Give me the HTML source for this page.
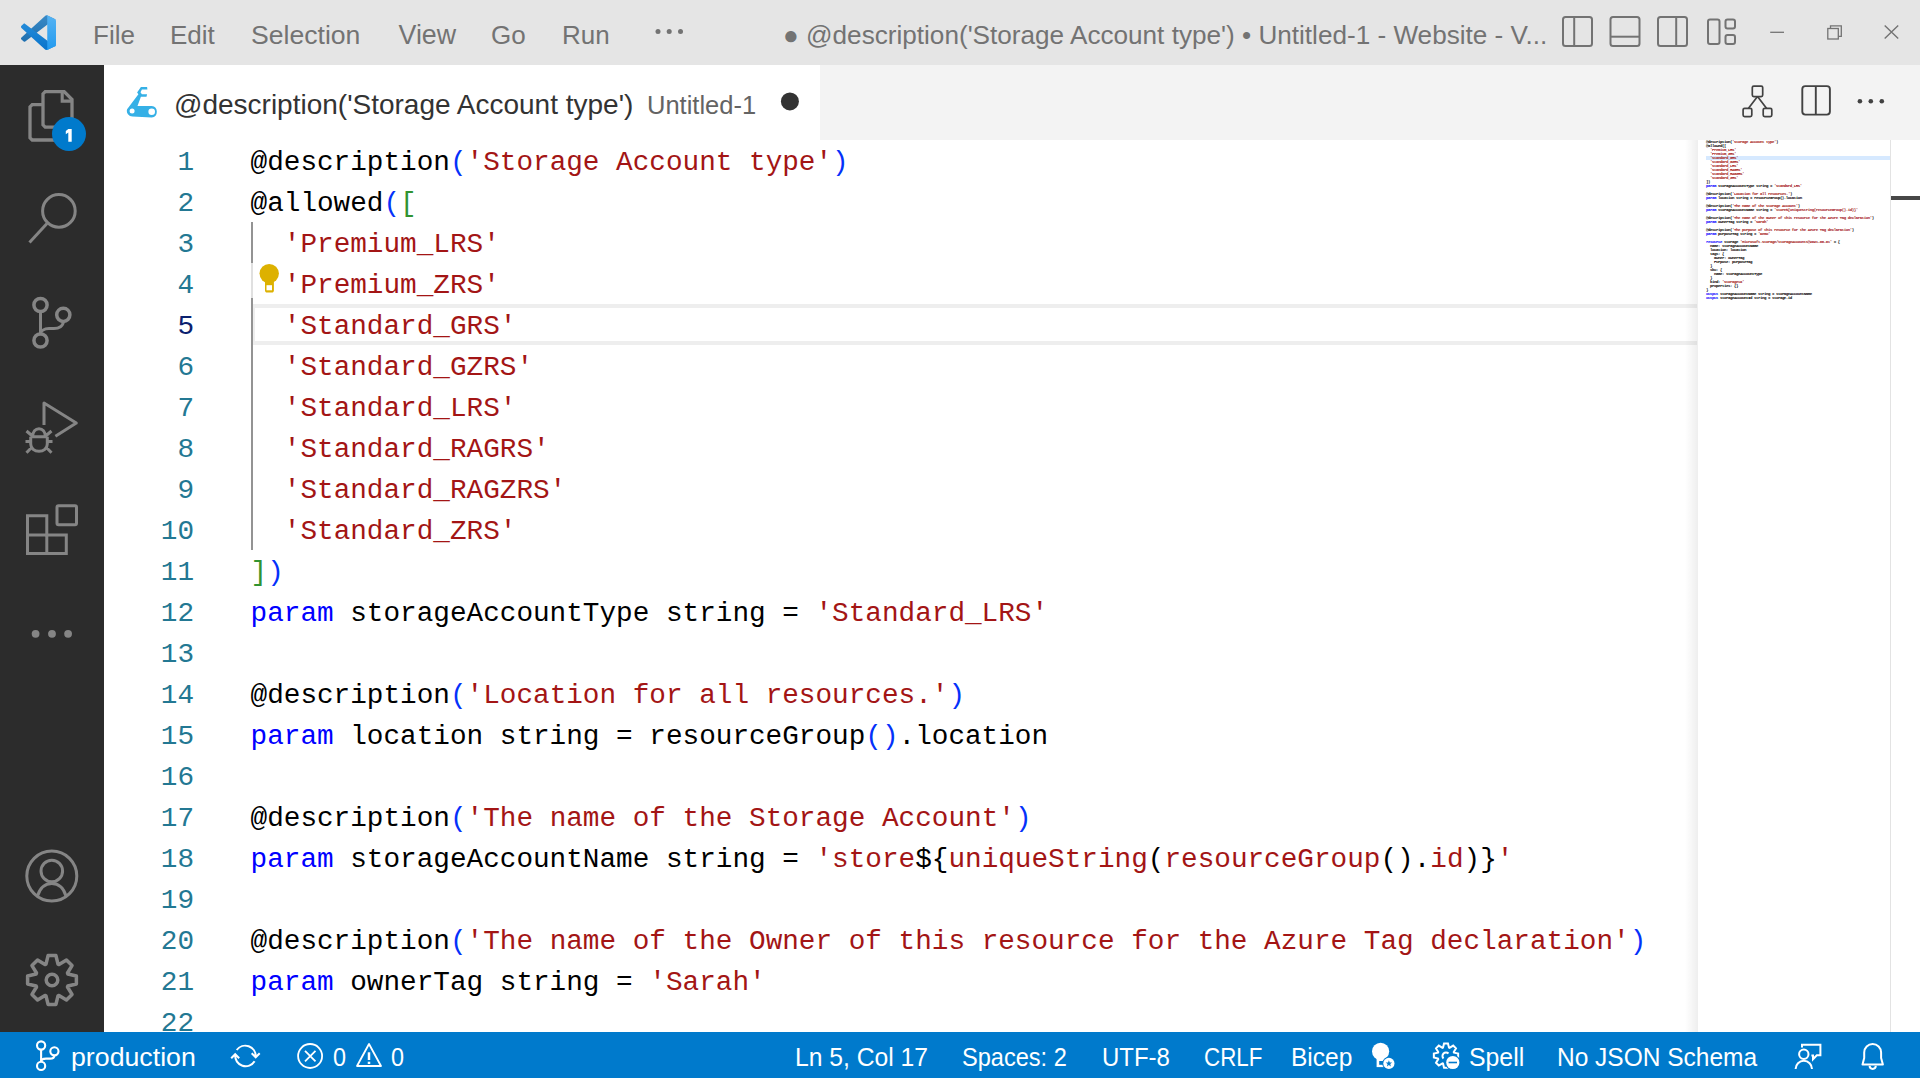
<!DOCTYPE html>
<html><head><meta charset="utf-8">
<style>
*{box-sizing:border-box}
html,body{margin:0;padding:0;width:1920px;height:1078px;overflow:hidden;background:#fff;font-family:"Liberation Sans",sans-serif}
.abs{position:absolute}
#title{position:absolute;left:0;top:0;width:1920px;height:65px;background:#e5e5e5}
.menu{position:absolute;top:2.5px;height:65px;line-height:65px;font-size:26px;color:#737373;white-space:pre}
#activity{position:absolute;left:0;top:65px;width:104px;height:967px;background:#2c2c2c}
#tabs{position:absolute;left:104px;top:65px;width:1816px;height:75px;background:#f3f3f3}
#tab{position:absolute;left:104px;top:65px;width:716px;height:75px;background:#fff}
.tabt{position:absolute;white-space:pre;font-size:27px;color:#333333}
#editor{position:absolute;left:104px;top:140px;width:1816px;height:892px;background:#fff;overflow:hidden}
.ln{position:absolute;left:250.55px;height:41px;line-height:41px;padding-top:2.4px;font-family:"Liberation Mono",monospace;font-size:27.7px;white-space:pre}
.num{position:absolute;left:104px;width:90px;text-align:right;height:41px;line-height:41px;padding-top:2.4px;font-family:"Liberation Mono",monospace;font-size:27.7px;color:#237893}
.num.cur{color:#0b216f}
#status{position:absolute;left:0;top:1032px;width:1920px;height:46px;background:#007acc}
.st{position:absolute;top:1034px;transform-origin:0 0;height:46px;line-height:46px;font-size:26px;color:#fff;white-space:pre}
#minimap{position:absolute;left:1698px;top:140px;width:192px;height:892px;background:#fff;overflow:hidden}
.mml{position:absolute;left:8px;height:4px;line-height:4px;font-family:"Liberation Mono",monospace;font-size:4.1px;letter-spacing:-0.46px;white-space:pre;font-weight:bold}
</style></head><body>
<!-- TITLE BAR -->
<div id="title"></div>
<svg class="abs" style="left:20.8px;top:14.7px" width="35" height="35.3" viewBox="0 0 100 100">
<defs><linearGradient id="g1" x1="0" y1="0" x2="0" y2="100" gradientUnits="userSpaceOnUse"><stop offset="0" stop-color="#3a8ac6"/><stop offset="1" stop-color="#1566a8"/></linearGradient>
<linearGradient id="g2" x1="0" y1="0" x2="0" y2="100" gradientUnits="userSpaceOnUse"><stop offset="0" stop-color="#2d93dd"/><stop offset="1" stop-color="#0873cb"/></linearGradient>
<linearGradient id="g3" x1="0" y1="0" x2="0" y2="100" gradientUnits="userSpaceOnUse"><stop offset="0" stop-color="#55b3f3"/><stop offset="1" stop-color="#229aef"/></linearGradient></defs>
<path fill="url(#g1)" d="M96.4614 10.7962L75.8569 0.875542C73.4719 -0.272773 70.6217 0.211611 68.75 2.08333L1.29858 63.5832C-0.515693 65.2373 -0.513607 68.0937 1.30308 69.7452L6.81272 74.754C8.29793 76.1042 10.5347 76.2036 12.1338 74.9905L93.3609 13.3699C96.086 11.3026 100 13.2462 100 16.6667V16.4275C100 14.0265 98.6246 11.8378 96.4614 10.7962Z"/>
<path fill="url(#g2)" d="M96.4614 89.2038L75.8569 99.1245C73.4719 100.273 70.6217 99.7884 68.75 97.9167L1.29858 36.4169C-0.515693 34.7627 -0.513607 31.9063 1.30308 30.2548L6.81272 25.246C8.29793 23.8958 10.5347 23.7964 12.1338 25.0095L93.3609 86.6301C96.086 88.6974 100 86.7538 100 83.3334V83.5726C100 85.9735 98.6246 88.1622 96.4614 89.2038Z"/>
<path fill="url(#g3)" d="M75.8578 99.1263C73.4721 100.274 70.6219 99.7885 68.75 97.9166C71.0564 100.223 75 98.5895 75 95.3278V4.67213C75 1.41039 71.0564 -0.223106 68.75 2.08329C70.6219 0.211402 73.4721 -0.273666 75.8578 0.873633L96.4587 10.7807C98.6234 11.8217 100 14.0112 100 16.4132V83.5871C100 85.9891 98.6234 88.1786 96.4586 89.2196L75.8578 99.1263Z"/>
</svg>
<div class="menu" style="left:93px">File</div>
<div class="menu" style="left:170px">Edit</div>
<div class="menu" style="left:251px;font-size:26.6px">Selection</div>
<div class="menu" style="left:398.5px;font-size:26.8px">View</div>
<div class="menu" style="left:491px">Go</div>
<div class="menu" style="left:562px">Run</div>
<svg class="abs" style="left:651.3px;top:23.8px" width="40" height="16"><circle cx="7" cy="7.5" r="2.5" fill="#737373"/><circle cx="18.2" cy="7.5" r="2.5" fill="#737373"/><circle cx="29.5" cy="7.5" r="2.5" fill="#737373"/></svg>
<div class="menu" style="left:783px;transform-origin:0 0;transform:scaleX(1.005)">● @description('Storage Account type') • Untitled-1 - Website - V...</div>
<svg class="abs" style="left:1550px;top:0" width="370" height="65" fill="none" stroke="#737373" stroke-width="2">
<rect x="13" y="17" width="29" height="29" rx="2.5"/><line x1="24.2" y1="17" x2="24.2" y2="46"/>
<rect x="60.5" y="17" width="29" height="29" rx="2.5"/><line x1="60.5" y1="36.7" x2="89.5" y2="36.7"/>
<rect x="108" y="17" width="29" height="29" rx="2.5"/><line x1="126.2" y1="17" x2="126.2" y2="46"/>
<rect x="158" y="19.5" width="11.5" height="24.5" rx="2"/><rect x="175.5" y="19.5" width="9.5" height="9" rx="2"/><rect x="175.5" y="35" width="9.5" height="9" rx="2"/>
<line x1="220.2" y1="32.3" x2="234" y2="32.3" stroke-width="1.3"/>
<g stroke-width="1.3"><rect x="277.8" y="28.5" width="10.5" height="10.5"/><path d="M280.5 28.5V25.8H291.3V36.3H288.3"/></g>
<path d="M334.7 25.4L348.2 38.6M348.2 25.4L334.7 38.6" stroke-width="1.4"/>
</svg>

<!-- ACTIVITY BAR -->
<div id="activity"></div>
<svg class="abs" style="left:0;top:65px" width="104" height="967" fill="none" stroke="#858585" stroke-width="3">
<g transform="translate(0,-65)">
<!-- files -->
<path d="M45.2 91.7H64.2L72 99.5V124.9L69.8 127.1H45.2L43 124.9V93.9Z" stroke-width="3.3"/>
<path d="M62.2 91.7V101.1H72" stroke-width="3.1"/>
<path d="M43 104.7H32.2L30 106.9V137.8L32.2 140H56" stroke-width="3.3"/>
<!-- search -->
<circle cx="58.9" cy="210.9" r="16.3"/>
<line x1="47" y1="223.5" x2="29.5" y2="242.5"/>
<!-- source control -->
<g stroke-width="3.5"><circle cx="40.5" cy="305" r="6.6"/><circle cx="63.3" cy="314.8" r="6.6"/><circle cx="40.5" cy="340.5" r="6.6"/></g>
<line x1="40.5" y1="311.8" x2="40.5" y2="333.7"/>
<path d="M63.3 321.6C63.3 326 59 328.5 54 328.5H49C44 328.5 40.5 331 40.5 334"/>
<!-- run and debug -->
<path d="M44 425V403L76.3 423.1L55.4 436.2" stroke-linejoin="round"/>
<path d="M30.7 436.75V444C30.7 448.5 34.5 451.3 39 451.3C43.5 451.3 47.3 448.5 47.3 444V436.75M32.7 436.75C32.7 431.5 35.5 428.7 39 428.7C42.5 428.7 45.3 431.5 45.3 436.75M30.7 436.75H47.3M25.5 441.6H30.7M47.3 441.6H52.5M26.5 431L31.8 435.5M51.5 431L46.2 435.5M26.5 452.8L31.8 447.3M51.5 452.8L46.2 447.3"/>
<!-- extensions -->
<path d="M27.5 515.8H46.8V535H66.3V553.5H27.5Z"/>
<line x1="27.5" y1="535" x2="46.8" y2="535"/><line x1="46.8" y1="535" x2="46.8" y2="553.5"/>
<rect x="57" y="505.8" width="19.5" height="19" rx="1.5"/>
<!-- accounts -->
<circle cx="51.8" cy="876" r="25"/>
<circle cx="51.8" cy="871" r="10.8"/>
<path d="M37.5 896C40 888 45 883.5 51.8 883.5C58.6 883.5 63.6 888 66 896"/>
</g>
</svg>
<svg class="abs" style="left:0;top:600px" width="104" height="60"><circle cx="35.6" cy="33.8" r="3.9" fill="#858585"/><circle cx="52" cy="33.8" r="3.9" fill="#858585"/><circle cx="68.1" cy="33.8" r="3.9" fill="#858585"/></svg>
<!-- gear -->
<svg class="abs" style="left:25.07px;top:953.07px" width="54" height="54" viewBox="-27 -27 54 54" fill="none" stroke="#858585" stroke-width="3.5" stroke-linejoin="round">
<path d="M15.91 -5.99L24.38 -3.94L24.38 3.94L15.91 5.99L15.48 7.02L20.03 14.46L14.46 20.03L7.02 15.48L5.99 15.91L3.94 24.38L-3.94 24.38L-5.99 15.91L-7.02 15.48L-14.46 20.03L-20.03 14.46L-15.48 7.02L-15.91 5.99L-24.38 3.94L-24.38 -3.94L-15.91 -5.99L-15.48 -7.02L-20.03 -14.46L-14.46 -20.03L-7.02 -15.48L-5.99 -15.91L-3.94 -24.38L3.94 -24.38L5.99 -15.91L7.02 -15.48L14.46 -20.03L20.03 -14.46L15.48 -7.02Z"/>
<circle cx="0" cy="0" r="5.8"/>
</svg>
<!-- badge -->
<svg class="abs" style="left:52px;top:117px" width="34" height="34"><circle cx="17" cy="17" r="17" fill="#007acc"/></svg>
<svg class="abs" style="left:52px;top:117px" width="34" height="34"><path d="M16.3 12H19.7V24.7H16.3V15.6L13.8 17.2V14Z" fill="#fff"/></svg>

<!-- TABS -->
<div id="tabs"></div>
<div id="tab"></div>
<svg class="abs" style="left:126px;top:86px" width="33" height="33" viewBox="0 0 33 33">
<path fill="#35b0e6" fill-rule="evenodd" d="M12.4 8.2L11.1 6.5L14.9 1.1H21.1L21.4 3.6H15.9L14.5 6.2L15.9 8.2H21.1L20.5 10.7H14.9L11.5 19.9H25.7A5.9 5.9 0 0 1 25.7 31.6L6.5 30.6A5.7 5.7 0 0 1 1.1 23.2ZM6.1 24.9m-2.5 0a2.5 2.5 0 1 0 5 0a2.5 2.5 0 1 0 -5 0ZM25.7 25.7m-3.3 0a3.3 3.3 0 1 0 6.6 0a3.3 3.3 0 1 0 -6.6 0Z"/>
</svg>
<div class="tabt" style="left:174px;top:86px;line-height:38px;font-size:28px">@description('Storage Account type')</div>
<div class="tabt" style="left:647px;top:86px;line-height:38px;color:#646464;font-size:25.5px">Untitled-1</div>
<svg class="abs" style="left:780px;top:92px" width="20" height="20"><circle cx="9.9" cy="9.4" r="9" fill="#333"/></svg>
<svg class="abs" style="left:1730px;top:65px" width="190" height="75" fill="none" stroke="#424242" stroke-width="1.7">
<rect x="22.3" y="21.1" width="10.4" height="10.5" rx="1.5"/>
<rect x="13.1" y="43.3" width="8.7" height="8.3" rx="1.5"/>
<rect x="33.2" y="43.3" width="8.6" height="8.3" rx="1.5"/>
<path d="M27.5 31.6L18.5 43.3M27.5 31.6L36.5 43.3"/>
<rect x="72.3" y="21.1" width="27.6" height="28.5" rx="3" stroke-width="1.9"/>
<line x1="85.8" y1="21.1" x2="85.8" y2="49.6" stroke-width="1.9"/>
<g fill="#424242" stroke="none"><circle cx="129.9" cy="36.25" r="2.3"/><circle cx="140.8" cy="36.25" r="2.3"/><circle cx="151.8" cy="36.25" r="2.3"/></g>
</svg>

<!-- EDITOR -->
<div id="editor"></div>
<!-- current line -->
<div class="abs" style="left:253px;top:304px;width:1444px;height:41px;border-top:4px solid #eeeeee;border-bottom:4px solid #eeeeee;border-left:2px solid #eeeeee"></div>
<!-- indent guide -->
<div class="abs" style="left:251px;top:222px;width:2px;height:328px;background:#939393"></div>
<div class="abs" style="left:251px;top:263px;width:2px;height:35px;background:#e0e0e0"></div>
<div class="ln" style="top:140px"><span style="color:#000000">@description</span><span style="color:#0431fa">(</span><span style="color:#a31515">&#x27;Storage Account type&#x27;</span><span style="color:#0431fa">)</span></div>
<div class="num" style="top:140px">1</div>
<div class="ln" style="top:181px"><span style="color:#000000">@allowed</span><span style="color:#0431fa">(</span><span style="color:#319331">[</span></div>
<div class="num" style="top:181px">2</div>
<div class="ln" style="top:222px"><span style="color:#000000">  </span><span style="color:#a31515">&#x27;Premium_LRS&#x27;</span></div>
<div class="num" style="top:222px">3</div>
<div class="ln" style="top:263px"><span style="color:#000000">  </span><span style="color:#a31515">&#x27;Premium_ZRS&#x27;</span></div>
<div class="num" style="top:263px">4</div>
<div class="ln" style="top:304px"><span style="color:#000000">  </span><span style="color:#a31515">&#x27;Standard_GRS&#x27;</span></div>
<div class="num cur" style="top:304px">5</div>
<div class="ln" style="top:345px"><span style="color:#000000">  </span><span style="color:#a31515">&#x27;Standard_GZRS&#x27;</span></div>
<div class="num" style="top:345px">6</div>
<div class="ln" style="top:386px"><span style="color:#000000">  </span><span style="color:#a31515">&#x27;Standard_LRS&#x27;</span></div>
<div class="num" style="top:386px">7</div>
<div class="ln" style="top:427px"><span style="color:#000000">  </span><span style="color:#a31515">&#x27;Standard_RAGRS&#x27;</span></div>
<div class="num" style="top:427px">8</div>
<div class="ln" style="top:468px"><span style="color:#000000">  </span><span style="color:#a31515">&#x27;Standard_RAGZRS&#x27;</span></div>
<div class="num" style="top:468px">9</div>
<div class="ln" style="top:509px"><span style="color:#000000">  </span><span style="color:#a31515">&#x27;Standard_ZRS&#x27;</span></div>
<div class="num" style="top:509px">10</div>
<div class="ln" style="top:550px"><span style="color:#319331">]</span><span style="color:#0431fa">)</span></div>
<div class="num" style="top:550px">11</div>
<div class="ln" style="top:591px"><span style="color:#0000ff">param</span><span style="color:#000000"> storageAccountType string = </span><span style="color:#a31515">&#x27;Standard_LRS&#x27;</span></div>
<div class="num" style="top:591px">12</div>
<div class="ln" style="top:632px"></div>
<div class="num" style="top:632px">13</div>
<div class="ln" style="top:673px"><span style="color:#000000">@description</span><span style="color:#0431fa">(</span><span style="color:#a31515">&#x27;Location for all resources.&#x27;</span><span style="color:#0431fa">)</span></div>
<div class="num" style="top:673px">14</div>
<div class="ln" style="top:714px"><span style="color:#0000ff">param</span><span style="color:#000000"> location string = resourceGroup</span><span style="color:#0431fa">()</span><span style="color:#000000">.location</span></div>
<div class="num" style="top:714px">15</div>
<div class="ln" style="top:755px"></div>
<div class="num" style="top:755px">16</div>
<div class="ln" style="top:796px"><span style="color:#000000">@description</span><span style="color:#0431fa">(</span><span style="color:#a31515">&#x27;The name of the Storage Account&#x27;</span><span style="color:#0431fa">)</span></div>
<div class="num" style="top:796px">17</div>
<div class="ln" style="top:837px"><span style="color:#0000ff">param</span><span style="color:#000000"> storageAccountName string = </span><span style="color:#a31515">&#x27;store</span><span style="color:#000000">${</span><span style="color:#a31515">uniqueString</span><span style="color:#000000">(</span><span style="color:#a31515">resourceGroup</span><span style="color:#000000">().</span><span style="color:#a31515">id</span><span style="color:#000000">)}</span><span style="color:#a31515">&#x27;</span></div>
<div class="num" style="top:837px">18</div>
<div class="ln" style="top:878px"></div>
<div class="num" style="top:878px">19</div>
<div class="ln" style="top:919px"><span style="color:#000000">@description</span><span style="color:#0431fa">(</span><span style="color:#a31515">&#x27;The name of the Owner of this resource for the Azure Tag declaration&#x27;</span><span style="color:#0431fa">)</span></div>
<div class="num" style="top:919px">20</div>
<div class="ln" style="top:960px"><span style="color:#0000ff">param</span><span style="color:#000000"> ownerTag string = </span><span style="color:#a31515">&#x27;Sarah&#x27;</span></div>
<div class="num" style="top:960px">21</div>
<div class="ln" style="top:1001px"></div>
<div class="num" style="top:1001px">22</div>
<!-- lightbulb -->
<svg class="abs" style="left:255px;top:260px" width="30" height="36">
<circle cx="14.2" cy="13.6" r="9.7" fill="#ddb100"/>
<path d="M10 20V30.5C10 31.8 10.8 32.6 12 32.6H16.9C18.1 32.6 18.9 31.8 18.9 30.5V20Z" fill="#ddb100"/>
<rect x="11.5" y="25.2" width="5.5" height="5.1" fill="#fff"/>
</svg>
<!-- minimap shadow -->
<div class="abs" style="left:1685px;top:140px;width:13px;height:892px;background:linear-gradient(to right,rgba(0,0,0,0),rgba(0,0,0,0.065))"></div>
<div id="minimap">
<div class="abs" style="left:8px;top:16px;width:184px;height:4px;background:#d6e9ff"></div>
<div class="mml" style="top:0px"><span style="color:#000">@description(</span><span style="color:#a31515">&#x27;Storage Account type&#x27;</span><span style="color:#000">)</span></div>
<div class="mml" style="top:4px"><span style="color:#000">@allowed([</span></div>
<div class="mml" style="top:8px"><span style="color:#000">  </span><span style="color:#a31515">&#x27;Premium_LRS&#x27;</span></div>
<div class="mml" style="top:12px"><span style="color:#000">  </span><span style="color:#a31515">&#x27;Premium_ZRS&#x27;</span></div>
<div class="mml" style="top:16px"><span style="color:#000">  </span><span style="color:#a31515">&#x27;Standard_GRS&#x27;</span></div>
<div class="mml" style="top:20px"><span style="color:#000">  </span><span style="color:#a31515">&#x27;Standard_GZRS&#x27;</span></div>
<div class="mml" style="top:24px"><span style="color:#000">  </span><span style="color:#a31515">&#x27;Standard_LRS&#x27;</span></div>
<div class="mml" style="top:28px"><span style="color:#000">  </span><span style="color:#a31515">&#x27;Standard_RAGRS&#x27;</span></div>
<div class="mml" style="top:32px"><span style="color:#000">  </span><span style="color:#a31515">&#x27;Standard_RAGZRS&#x27;</span></div>
<div class="mml" style="top:36px"><span style="color:#000">  </span><span style="color:#a31515">&#x27;Standard_ZRS&#x27;</span></div>
<div class="mml" style="top:40px"><span style="color:#000">])</span></div>
<div class="mml" style="top:44px"><span style="color:#000000"></span><span style="color:#0000ff">param</span><span style="color:#000"> storageAccountType string = </span><span style="color:#a31515">&#x27;Standard_LRS&#x27;</span></div>
<div class="mml" style="top:48px"></div>
<div class="mml" style="top:52px"><span style="color:#000">@description(</span><span style="color:#a31515">&#x27;Location for all resources.&#x27;</span><span style="color:#000">)</span></div>
<div class="mml" style="top:56px"><span style="color:#000000"></span><span style="color:#0000ff">param</span><span style="color:#000"> location string = resourceGroup().location</span></div>
<div class="mml" style="top:60px"></div>
<div class="mml" style="top:64px"><span style="color:#000">@description(</span><span style="color:#a31515">&#x27;The name of the Storage Account&#x27;</span><span style="color:#000">)</span></div>
<div class="mml" style="top:68px"><span style="color:#000000"></span><span style="color:#0000ff">param</span><span style="color:#000"> storageAccountName string = </span><span style="color:#a31515">&#x27;store${uniqueString(resourceGroup().id)}&#x27;</span></div>
<div class="mml" style="top:72px"></div>
<div class="mml" style="top:76px"><span style="color:#000">@description(</span><span style="color:#a31515">&#x27;The name of the Owner of this resource for the Azure Tag declaration&#x27;</span><span style="color:#000">)</span></div>
<div class="mml" style="top:80px"><span style="color:#000000"></span><span style="color:#0000ff">param</span><span style="color:#000"> ownerTag string = </span><span style="color:#a31515">&#x27;Sarah&#x27;</span></div>
<div class="mml" style="top:84px"></div>
<div class="mml" style="top:88px"><span style="color:#000">@description(</span><span style="color:#a31515">&#x27;The purpose of this resource for the Azure Tag declaration&#x27;</span><span style="color:#000">)</span></div>
<div class="mml" style="top:92px"><span style="color:#000000"></span><span style="color:#0000ff">param</span><span style="color:#000"> purposeTag string = </span><span style="color:#a31515">&#x27;Demo&#x27;</span></div>
<div class="mml" style="top:96px"></div>
<div class="mml" style="top:100px"><span style="color:#000000"></span><span style="color:#0000ff">resource</span><span style="color:#000"> storage </span><span style="color:#a31515">&#x27;Microsoft.Storage/storageAccounts@2021-06-01&#x27;</span><span style="color:#000"> = {</span></div>
<div class="mml" style="top:104px"><span style="color:#000">  name: storageAccountName</span></div>
<div class="mml" style="top:108px"><span style="color:#000">  location: location</span></div>
<div class="mml" style="top:112px"><span style="color:#000">  tags: {</span></div>
<div class="mml" style="top:116px"><span style="color:#000">    Owner: ownerTag</span></div>
<div class="mml" style="top:120px"><span style="color:#000">    Purpose: purposeTag</span></div>
<div class="mml" style="top:124px"><span style="color:#000">  }</span></div>
<div class="mml" style="top:128px"><span style="color:#000">  sku: {</span></div>
<div class="mml" style="top:132px"><span style="color:#000">    name: storageAccountType</span></div>
<div class="mml" style="top:136px"><span style="color:#000">  }</span></div>
<div class="mml" style="top:140px"><span style="color:#000">  kind: </span><span style="color:#a31515">&#x27;StorageV2&#x27;</span></div>
<div class="mml" style="top:144px"><span style="color:#000">  properties: {}</span></div>
<div class="mml" style="top:148px"><span style="color:#000">}</span></div>
<div class="mml" style="top:152px"><span style="color:#000000"></span><span style="color:#0000ff">output</span><span style="color:#000"> storageAccountName string = storageAccountName</span></div>
<div class="mml" style="top:156px"><span style="color:#000000"></span><span style="color:#0000ff">output</span><span style="color:#000"> storageAccountId string = storage.id</span></div>
</div>
<div class="abs" style="left:1890px;top:140px;width:1px;height:892px;background:#e3e3e3"></div>
<div class="abs" style="left:1891px;top:196px;width:29px;height:4px;background:#474747"></div>

<!-- STATUS BAR -->
<div id="status"></div>

<svg class="abs" style="left:0;top:1032px" width="1920" height="46" fill="none" stroke="#fff" stroke-width="1.8">
<g transform="translate(0,-1032)">
<g stroke-width="2.1"><circle cx="41.1" cy="1045.5" r="4.1"/><circle cx="41.1" cy="1065.9" r="4.1"/><circle cx="54.4" cy="1051.3" r="4.1"/>
<line x1="41.1" y1="1049.6" x2="41.1" y2="1061.8"/>
<path d="M54.4 1055.4C54.4 1057.5 52.5 1058.6 50 1058.6H46C43 1058.6 41.1 1060 41.1 1062"/></g>
<!-- sync -->
<path d="M236.7 1050A10.5 10.5 0 0 1 255.7 1056.7M251.7 1053.3L255.7 1057.3L259.7 1053.3M235.2 1055A10.5 10.5 0 0 0 254.6 1061.3M231.2 1058.2L235.2 1054.2L239.2 1058.2" stroke-width="2"/>
<!-- error -->
<circle cx="310.1" cy="1056" r="12"/>
<path d="M305 1050.8L315.5 1061.3M315.5 1050.8L305 1061.3"/>
<!-- warning -->
<path d="M369 1044L357 1066H381Z" stroke-linejoin="round"/>
<line x1="369" y1="1052.3" x2="369" y2="1060" stroke-width="2.5"/>
<line x1="369" y1="1061.7" x2="369" y2="1064" stroke-width="2.5"/>
</g>
</svg>
<div class="st" style="left:71.3px;transform:scaleX(1.028)">production</div>
<div class="st" style="left:332.7px;transform:scaleX(0.9)">0</div>
<div class="st" style="left:390.8px;transform:scaleX(0.9)">0</div>
<div class="st" style="left:794.5px;transform:scaleX(0.949)">Ln 5, Col 17</div>
<div class="st" style="left:962px;transform:scaleX(0.906)">Spaces: 2</div>
<div class="st" style="left:1102.3px;transform:scaleX(0.922)">UTF-8</div>
<div class="st" style="left:1204.2px;transform:scaleX(0.859)">CRLF</div>
<div class="st" style="left:1290.9px;transform:scaleX(0.944)">Bicep</div>
<div class="st" style="left:1468.5px;transform:scaleX(0.954)">Spell</div>
<div class="st" style="left:1557.3px;transform:scaleX(0.942)">No JSON Schema</div>
<svg class="abs" style="left:1360px;top:1032px" width="60" height="46">
<circle cx="20.6" cy="19.3" r="8.6" fill="#fff"/>
<path d="M16.6 24H24.2V35.1H16.6Z" fill="#fff"/>
<rect x="19.2" y="29" width="3.8" height="3.8" fill="#007acc"/>
<circle cx="28.9" cy="31.4" r="6.6" fill="#007acc"/>
<circle cx="28.9" cy="31.4" r="5.6" fill="#fff"/>
<path d="M28.9 28.2L29.75 30.5L32.1 30.6L30.25 32.05L30.9 34.4L28.9 33.05L26.9 34.4L27.55 32.05L25.7 30.6L28.05 30.5Z" fill="#007acc"/>
</svg>
<svg class="abs" style="left:1420px;top:1032px" width="500" height="46" fill="none" stroke="#fff" stroke-width="2">
<path d="M33.96 20.61L38.14 21.64L38.14 25.56L33.96 26.59L33.74 27.11L35.97 30.80L33.20 33.57L29.51 31.34L28.99 31.56L27.96 35.74L24.04 35.74L23.01 31.56L22.49 31.34L18.80 33.57L16.03 30.80L18.26 27.11L18.04 26.59L13.86 25.56L13.86 21.64L18.04 20.61L18.26 20.09L16.03 16.40L18.80 13.63L22.49 15.86L23.01 15.64L24.04 11.46L27.96 11.46L28.99 15.64L29.51 15.86L33.20 13.63L35.97 16.40L33.74 20.09Z"/>
<path d="M28.5 21.5A3.2 3.2 0 1 0 23.5 26.5"/>
<circle cx="32.8" cy="30.5" r="7.8" fill="#007acc" stroke="none"/>
<circle cx="32.8" cy="30.5" r="6.6" fill="#fff" stroke="none"/>
<line x1="28.6" y1="30.5" x2="37" y2="30.5" stroke="#007acc" stroke-width="1.6"/>
<!-- feedback -->
<path d="M382 15.6V12.8H400.4V23.3H396.8L393 27.2V23.6H391.4"/>
<circle cx="383.8" cy="22.2" r="4.7"/>
<path d="M375.6 37A8.2 8.2 0 0 1 392 37"/>
<!-- bell -->
<path d="M444.2 20.45A8.45 8.45 0 0 1 461.1 20.45V25.9L462.9 32.5H442.5L444.2 25.9Z" stroke-linejoin="round"/>
<path d="M449.6 33.8A3.1 3.1 0 0 0 455.8 33.8"/>
</svg>

</body></html>
